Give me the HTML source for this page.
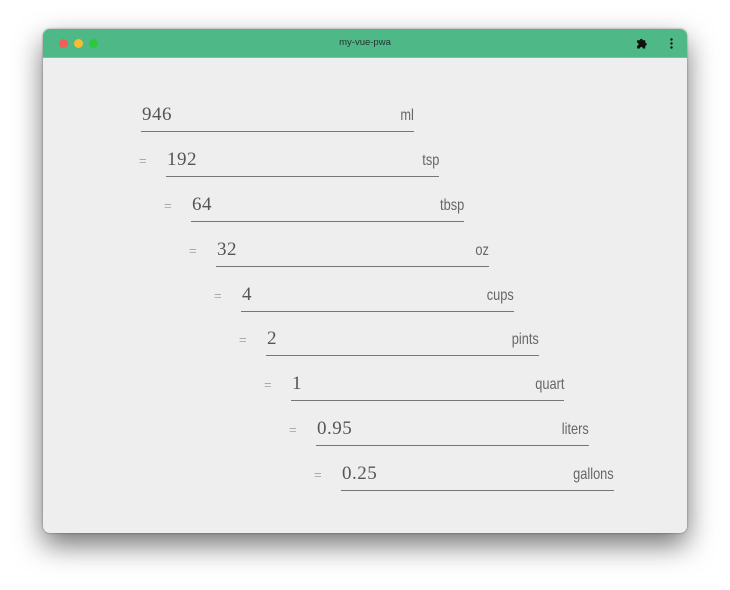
<!DOCTYPE html>
<html><head><meta charset="utf-8"><style>
body{margin:0;width:730px;height:590px;background:#fff;position:relative;overflow:hidden;font-family:"Liberation Sans",sans-serif}
.win{position:absolute;left:43px;top:29px;width:644px;height:504px;background:#eeeeee;border-radius:7px;overflow:hidden;box-shadow:0 12px 28px rgba(0,0,0,.55),0 0 2px rgba(0,0,0,.4)}
.bar{position:absolute;left:0;top:0;width:100%;height:28px;background:#4fb887;border-bottom:1px solid #6fc79c}
.dot{position:absolute;top:10px;width:9px;height:9px;border-radius:50%}
.title{position:absolute;top:8px;width:100%;text-align:center;font-size:9.5px;color:#233}
.row{position:absolute;height:20px}
.line{position:absolute;left:0;right:0;bottom:0;height:1px;background:#777}
.num{position:absolute;left:1px;bottom:6px;font-family:"Liberation Serif","DejaVu Serif",serif;font-size:19px;color:#555;letter-spacing:.5px}
.unit{position:absolute;right:0;bottom:7px;font-family:"Liberation Sans Narrow","Liberation Sans",sans-serif;font-size:16px;color:#666;transform:scaleX(.8);transform-origin:right}
.eq{position:absolute;left:-27px;bottom:9px;font-size:13px;color:#aaa}
</style></head><body>
<div class="win">
<div class="bar">
<div class="dot" style="left:16px;background:#f25f58"></div>
<div class="dot" style="left:31px;background:#f7bd2e"></div>
<div class="dot" style="left:46px;background:#2bc840"></div>
<div class="title">my-vue-pwa</div>
<svg style="position:absolute;left:593px;top:8px" width="12" height="12" viewBox="0 0 11 11"><path d="M1 3h2.5a1.3 1.3 0 1 1 2.6 0H8.5v2.3a1.3 1.3 0 1 1 0 2.6V10.5H6.2a1.3 1.3 0 1 0-2.6 0H1V7.9a1.3 1.3 0 1 0 0-2.6z" fill="#111"/></svg>
<svg style="position:absolute;left:627px;top:9px" width="3" height="11"><circle cx="1.5" cy="1.5" r="1.2" fill="#111"/><circle cx="1.5" cy="5.5" r="1.2" fill="#111"/><circle cx="1.5" cy="9.5" r="1.2" fill="#111"/></svg>
</div>
</div>
<div class="row" style="left:141px;top:112px;width:273px"><span class="num">946</span><span class="unit">ml</span><div class="line"></div></div>
<div class="row" style="left:166px;top:157px;width:273px"><span class="eq">=</span><span class="num">192</span><span class="unit">tsp</span><div class="line"></div></div>
<div class="row" style="left:191px;top:202px;width:273px"><span class="eq">=</span><span class="num">64</span><span class="unit">tbsp</span><div class="line"></div></div>
<div class="row" style="left:216px;top:247px;width:273px"><span class="eq">=</span><span class="num">32</span><span class="unit">oz</span><div class="line"></div></div>
<div class="row" style="left:241px;top:292px;width:273px"><span class="eq">=</span><span class="num">4</span><span class="unit">cups</span><div class="line"></div></div>
<div class="row" style="left:266px;top:336px;width:273px"><span class="eq">=</span><span class="num">2</span><span class="unit">pints</span><div class="line"></div></div>
<div class="row" style="left:291px;top:381px;width:273px"><span class="eq">=</span><span class="num">1</span><span class="unit">quart</span><div class="line"></div></div>
<div class="row" style="left:316px;top:426px;width:273px"><span class="eq">=</span><span class="num">0.95</span><span class="unit">liters</span><div class="line"></div></div>
<div class="row" style="left:341px;top:471px;width:273px"><span class="eq">=</span><span class="num">0.25</span><span class="unit">gallons</span><div class="line"></div></div>
</body></html>
